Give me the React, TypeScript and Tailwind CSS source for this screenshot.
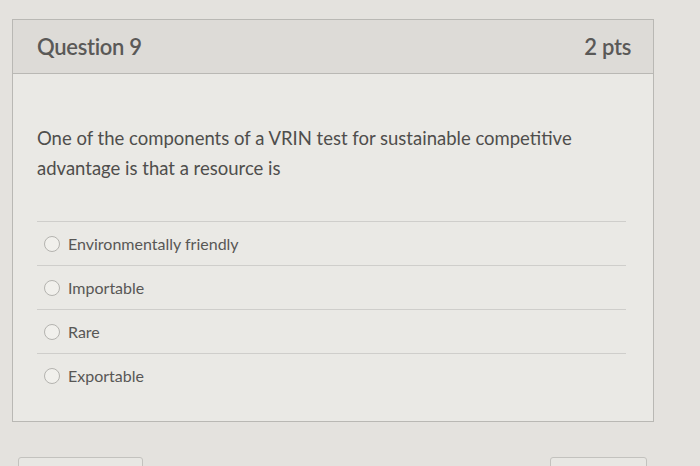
const ANSWERS = ["Environmentally friendly", "Importable", "Rare", "Exportable"];

function Radio() {
  return (
    <span className="mr-[8px] inline-block h-[16px] w-[16px] shrink-0 rounded-full border border-[#b4b3af] bg-[#f1f0ec]" />
  );
}

export default function App() {
  return (
    <div
      className="h-[466px] w-[700px] overflow-hidden bg-[#e4e2de] text-[#555452]"
      style={{ fontFamily: "Lato, 'Open Sans', sans-serif" }}
    >
      <div className="pl-[12px] pt-[19px]">
        <div className="w-[642px] border border-[#b9b8b4] bg-[#eae9e5]">
          <div className="flex h-[54px] items-center justify-between border-b border-[#b9b8b4] bg-[#dddbd7] pl-[24px] pr-[22px]">
            <h2 className="text-[22px] font-semibold tracking-[-0.3px] text-[#5a5957]">Question 9</h2>
            <span className="text-[22px] font-semibold tracking-[-0.3px] text-[#5a5957]">2 pts</span>
          </div>
          <div className="px-[24px] pb-[24px] pt-[49px]">
            <p className="w-[580px] text-[18.5px] leading-[30px] text-[#4f4e4c]">
              One of the components of a VRIN test for sustainable competitive advantage is that a resource is
            </p>
            <div className="mt-[38px] mr-[3px]">
              {ANSWERS.map((a) => (
                <div key={a} className="flex h-[44px] items-center border-t border-[#cfcecb] pl-[7px]">
                  <Radio />
                  <span className="text-[16px] text-[#585755]">{a}</span>
                </div>
              ))}
            </div>
          </div>
        </div>
      </div>
      <div className="mt-[35px] flex justify-between pl-[18px] pr-[53px]">
        <div className="h-[30px] w-[125px] rounded-[3px] border border-[#c3c2be] bg-[#e8e7e3]" />
        <div className="h-[30px] w-[97px] rounded-[3px] border border-[#c3c2be] bg-[#e8e7e3]" />
      </div>
    </div>
  );
}
